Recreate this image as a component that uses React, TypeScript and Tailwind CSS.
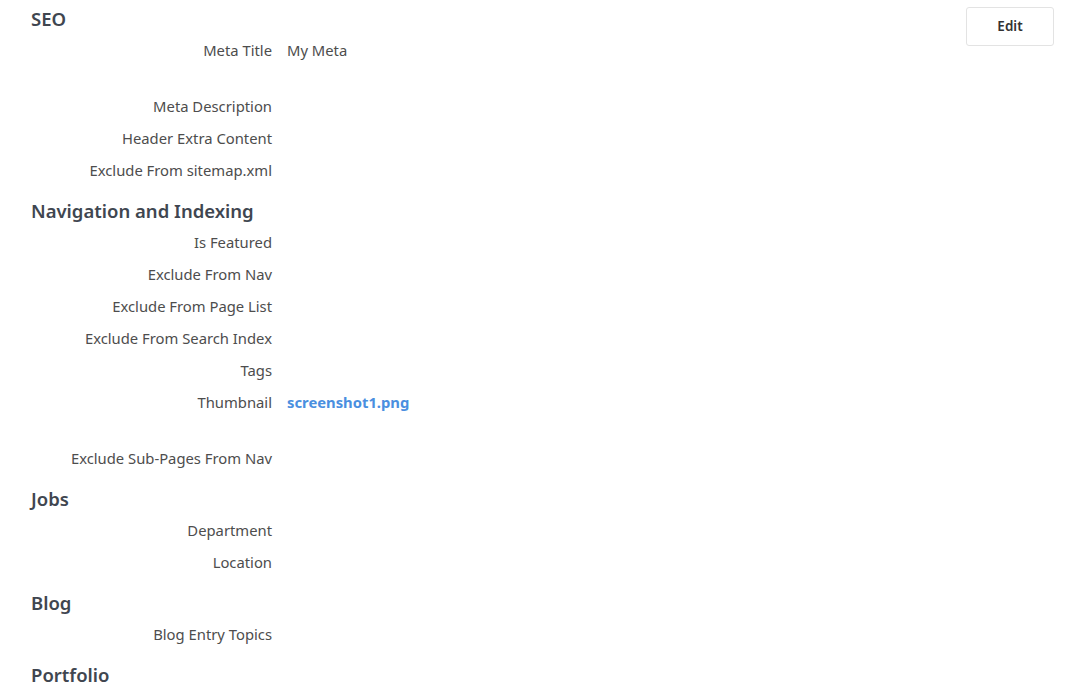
const sections: { title: string; rows: { label: string; value?: string; link?: boolean; tall?: boolean }[] }[] = [
  {
    title: "SEO",
    rows: [
      { label: "Meta Title", value: "My Meta", tall: true },
      { label: "Meta Description" },
      { label: "Header Extra Content" },
      { label: "Exclude From sitemap.xml" },
    ],
  },
  {
    title: "Navigation and Indexing",
    rows: [
      { label: "Is Featured" },
      { label: "Exclude From Nav" },
      { label: "Exclude From Page List" },
      { label: "Exclude From Search Index" },
      { label: "Tags" },
      { label: "Thumbnail", value: "screenshot1.png", link: true, tall: true },
      { label: "Exclude Sub-Pages From Nav" },
    ],
  },
  {
    title: "Jobs",
    rows: [{ label: "Department" }, { label: "Location" }],
  },
  {
    title: "Blog",
    rows: [{ label: "Blog Entry Topics" }],
  },
  {
    title: "Portfolio",
    rows: [],
  },
];

const App = () => {
  return (
    <div className="flex h-[686px] overflow-hidden bg-white font-['Noto_Sans',sans-serif] text-[#4d4d4d]">
      <div className="flex-1 pl-[31px] pt-1">
        {sections.map((section, i) => (
          <div key={section.title}>
            <h3
              className={`${i === 0 ? "" : "mt-[10px]"} h-[30px] text-[18.5px] leading-[30px] font-semibold text-[#404650]`}
            >
              {section.title}
            </h3>
            {section.rows.map((row) => (
              <div key={row.label} className={`flex gap-[15px] text-[14.8px] leading-8 ${row.tall ? "pb-6" : ""}`}>
                <div className="w-[241px] shrink-0 text-right">{row.label}</div>
                {row.value &&
                  (row.link ? (
                    <a href="#" className="font-bold text-[#4a8fe0]">
                      {row.value}
                    </a>
                  ) : (
                    <div>{row.value}</div>
                  ))}
              </div>
            ))}
          </div>
        ))}
      </div>
      <div className="pt-[7px] pr-[20px]">
        <button className="h-[39px] w-[88px] rounded-[3px] border border-[#e3e3e3] bg-white text-[13.5px] font-semibold text-[#333]">
          Edit
        </button>
      </div>
    </div>
  );
};

export default App;
